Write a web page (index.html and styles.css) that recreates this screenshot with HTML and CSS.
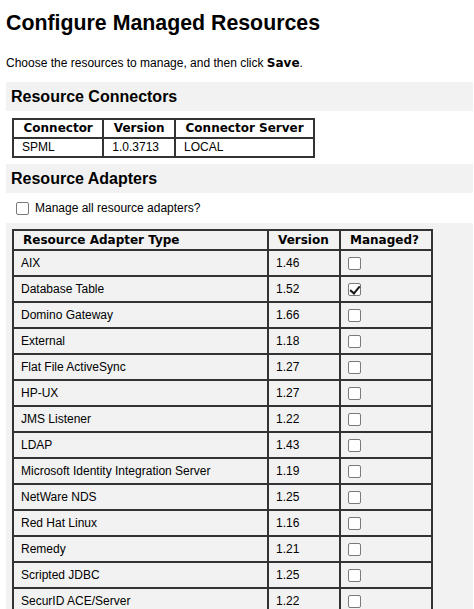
FILE: index.html
```html
<!DOCTYPE html>
<html lang="en">
<head>
<meta charset="utf-8">
<title>Configure Managed Resources</title>
<link rel="stylesheet" href="styles.css">
</head>
<body>
<h1 class="page-title">Configure Managed Resources</h1>
<p class="intro">Choose the resources to manage, and then click <span class="keyword">Save</span>.</p>

<h2 class="section-bar">Resource Connectors</h2>
<table class="grid connectors">
  <thead>
    <tr><th>Connector</th><th>Version</th><th>Connector Server</th></tr>
  </thead>
  <tbody>
    <tr><td>SPML</td><td>1.0.3713</td><td>LOCAL</td></tr>
  </tbody>
</table>

<h2 class="section-bar">Resource Adapters</h2>
<label class="manage-all"><input type="checkbox" class="cb"> Manage all resource adapters?</label>

<div class="panel">
<table class="grid adapters">
  <thead>
    <tr><th class="col-type">Resource Adapter Type</th><th class="col-ver">Version</th><th class="col-man">Managed?</th></tr>
  </thead>
  <tbody>
    <tr><td>AIX</td><td>1.46</td><td><input type="checkbox" class="cb"></td></tr>
    <tr><td>Database Table</td><td>1.52</td><td><input type="checkbox" class="cb" checked></td></tr>
    <tr><td>Domino Gateway</td><td>1.66</td><td><input type="checkbox" class="cb"></td></tr>
    <tr><td>External</td><td>1.18</td><td><input type="checkbox" class="cb"></td></tr>
    <tr><td>Flat File ActiveSync</td><td>1.27</td><td><input type="checkbox" class="cb"></td></tr>
    <tr><td>HP-UX</td><td>1.27</td><td><input type="checkbox" class="cb"></td></tr>
    <tr><td>JMS Listener</td><td>1.22</td><td><input type="checkbox" class="cb"></td></tr>
    <tr><td>LDAP</td><td>1.43</td><td><input type="checkbox" class="cb"></td></tr>
    <tr><td>Microsoft Identity Integration Server</td><td>1.19</td><td><input type="checkbox" class="cb"></td></tr>
    <tr><td>NetWare NDS</td><td>1.25</td><td><input type="checkbox" class="cb"></td></tr>
    <tr><td>Red Hat Linux</td><td>1.16</td><td><input type="checkbox" class="cb"></td></tr>
    <tr><td>Remedy</td><td>1.21</td><td><input type="checkbox" class="cb"></td></tr>
    <tr><td>Scripted JDBC</td><td>1.25</td><td><input type="checkbox" class="cb"></td></tr>
    <tr><td>SecurID ACE/Server</td><td>1.22</td><td><input type="checkbox" class="cb"></td></tr>
  </tbody>
</table>
</div>
</body>
</html>
```

FILE: styles.css
```css
html { background: #ffffff; }

body {
  margin: 0 1px 0 6px;
  font-family: "Liberation Sans", Arial, sans-serif;
  font-size: 12px;
  color: #000000;
}

.page-title {
  margin: 11px 0 0;
  font-size: 21.33px;
  line-height: 24px;
  font-weight: bold;
}

.intro {
  margin: 21px 0 0;
  line-height: 14px;
}

.keyword {
  font-family: "DejaVu Sans", sans-serif;
  font-weight: bold;
}

.section-bar {
  margin: 12px 0 0;
  padding: 5px 5px;
  font-size: 16px;
  line-height: 19px;
  font-weight: bold;
  background: #f2f2f2;
}

.section-bar + .grid { margin-top: 7px; }
.grid + .section-bar { margin-top: 6px; }

.grid {
  border-collapse: separate;
  border-spacing: 0;
  border: 1px solid #333333;
}

.grid th,
.grid td {
  border: 1px solid #333333;
  text-align: left;
  vertical-align: middle;
}

.grid th {
  font-family: "DejaVu Sans", sans-serif;
  font-weight: bold;
  font-size: 12px;
  white-space: nowrap;
}

.connectors {
  margin-left: 6px;
  background: #ffffff;
}

.connectors th {
  padding: 1px 9.5px;
  line-height: 15px;
}

.connectors td {
  padding: 1px 8px;
  line-height: 15px;
}

.manage-all {
  display: flex;
  align-items: center;
  gap: 6px;
  padding: 7px 0 7px 10px;
  line-height: 16px;
}

.panel {
  background: #f2f2f2;
  padding: 6px 0 6px 6px;
}

.adapters {
  width: 421px;
  box-sizing: border-box;
}

.adapters th {
  padding: 1px 9px;
  line-height: 16px;
}

.adapters td {
  padding: 5px 7px;
  line-height: 14px;
}

.adapters .col-ver { width: 52px; }
.adapters .col-man { width: 72px; }

.cb {
  -webkit-appearance: none;
  appearance: none;
  position: relative;
  display: block;
  flex: none;
  width: 13px;
  height: 13px;
  margin: 0;
  box-sizing: border-box;
  border: 1px solid #7a7a7a;
  border-radius: 2px;
  background: #ffffff;
}

.cb:checked::after {
  content: "";
  position: absolute;
  left: 3px;
  top: 0px;
  width: 4px;
  height: 8px;
  border-right: 2px solid #1a1a1a;
  border-bottom: 2px solid #1a1a1a;
  transform: rotate(40deg);
}
```
